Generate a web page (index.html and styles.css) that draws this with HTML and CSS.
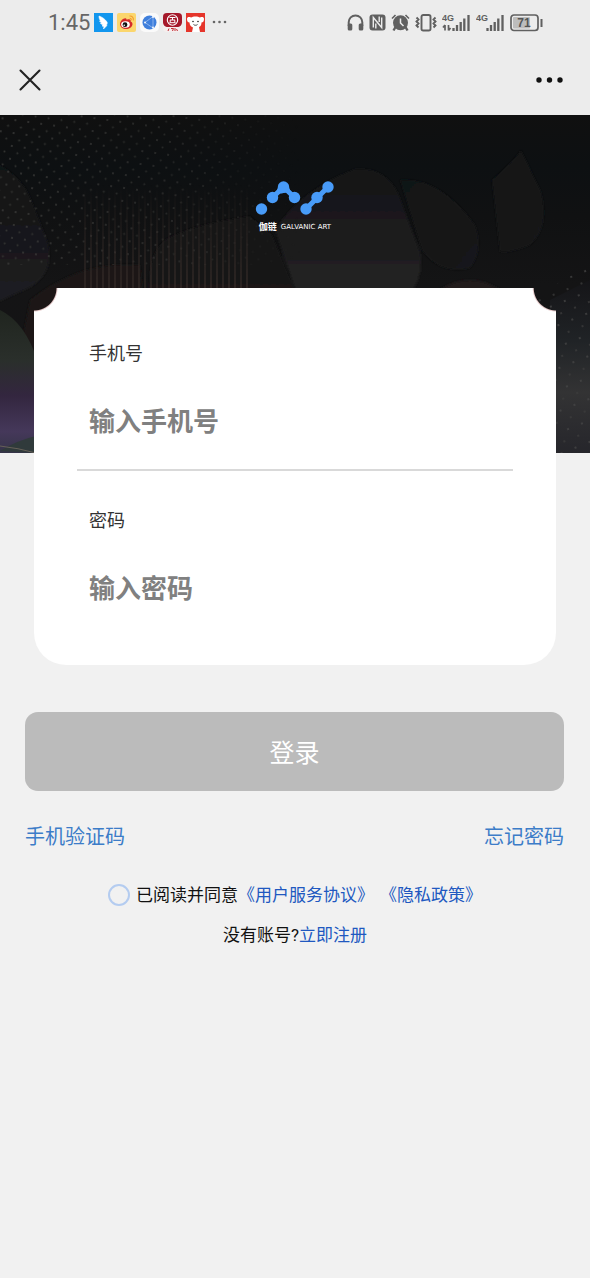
FILE: index.html
```html
<!DOCTYPE html>
<html lang="zh-CN">
<head>
<meta charset="utf-8">
<meta name="viewport" content="width=device-width, initial-scale=1">
<title>登录</title>
<link rel="stylesheet" href="styles.css">
</head>
<body>
<header class="top">
  <div class="status">
    <div class="status-left">
      <span class="time">1:45</span>
      <svg width="19" height="19" viewBox="0 0 19 19"><rect width="19" height="19" fill="#1296ee"/><path d="M5 3c3 1 6 3 8 6 .5 1 .2 1.600-.2 2.500L12 12.500h1L9.500 16l.5-2.500-2-.5 1-1-2.500-1.500 1-.4L5.500 8l1-.2C5.500 6.500 5 5 5 3z" fill="#fff" stroke="#fff" stroke-width=".6"/></svg>
      <svg width="19" height="19" viewBox="0 0 19 19"><rect width="19" height="19" rx="2" fill="#fbd66d"/><path d="M3 11c0-3 4-6.500 6-5.500 1 .5.500 1.500.500 1.500s3-1.500 4 0c.5.8 0 1.500 0 1.500s2 .5 2 2.500c0 3-3.500 5-6.500 5S3 14 3 11z" fill="#d52b2a"/><ellipse cx="8.500" cy="11.500" rx="4.300" ry="3.300" fill="#fff"/><circle cx="8" cy="11.700" r="2.400" fill="#111"/><circle cx="7.200" cy="12.200" r=".8" fill="#fff"/><path d="M12.500 3c2.500-.3 4.500 2 3.700 4.500M12.700 5.200c1.200 0 1.900 1 1.500 2" fill="none" stroke="#f39a2e" stroke-width="1.100"/></svg>
      <svg width="19" height="19" viewBox="0 0 19 19"><rect width="19" height="19" rx="5" fill="#fafafa"/><circle cx="9.500" cy="9.500" r="7" fill="#3f7fdc"/><path d="M13 3.500L5 9.500l8 5.500M13 3.500v11" fill="none" stroke="#a9c9f5" stroke-width=".7"/><circle cx="5" cy="9.500" r=".9" fill="#fff"/><circle cx="13" cy="4" r=".9" fill="#fff"/><circle cx="13" cy="14.500" r=".9" fill="#fff"/></svg>
      <svg width="19" height="19" viewBox="0 0 19 19"><rect width="19" height="19" rx="4" fill="#f5eeee"/><path d="M4 0h11c3 0 4 1.500 4 4v5c0 3-2 5-5 5H5c-3 0-5-2-5-5V4c0-2.500 1-4 4-4z" fill="#a5182a"/><circle cx="9.500" cy="7" r="5.200" fill="none" stroke="#fff" stroke-width="1.100"/><path d="M6.500 4.500h6M7 7h5M6.500 9.700h6M9.500 4.500v2.500M7.200 7v2.500M11.800 7v2.500" stroke="#fff" fill="none" stroke-width="1"/><path d="M6 15.500l-1 2.500M8 15.500h2.500l-1 2.500M12 15v3M13.500 16l1 2" stroke="#c22b32" fill="none"/></svg>
      <svg width="19" height="19" viewBox="0 0 19 19"><rect width="19" height="19" fill="#e5352b"/><path d="M1 6c0-2 2-2.500 4-1.500C7 3 12 3 14 4.500c2-1 4-.5 4 1.500 0 2.500-1 3.500-2.500 3.500 0 2.500-1 4-2.500 4.500l1 5H6l1-4.500c-2-.5-3.500-2.500-3.500-5C2 9.500 1 8.500 1 6z" fill="#fff"/><circle cx="7" cy="8.500" r=".8" fill="#222"/><circle cx="12" cy="8.500" r=".8" fill="#222"/><path d="M7.500 11.500c1 1 3 1 4 0" fill="none" stroke="#333" stroke-width=".9"/></svg>
      <svg class="more-apps" width="15" height="19" viewBox="0 0 15 19" fill="#666"><circle cx="2" cy="9" r="1.300"/><circle cx="7.500" cy="9" r="1.300"/><circle cx="13" cy="9" r="1.300"/></svg>
    </div>
    <div class="status-right">
      <svg width="17" height="18" viewBox="0 0 17 18"><path d="M1.700 12V8.200a6.800 6.800 0 0 1 13.600 0V12" fill="none" stroke="#606060" stroke-width="2"/><rect x=".7" y="9.500" width="4.600" height="7" rx="1.500" fill="#606060"/><rect x="11.700" y="9.500" width="4.600" height="7" rx="1.500" fill="#606060"/></svg>
      <svg width="17" height="18" viewBox="0 0 17 18"><rect x=".5" y=".5" width="16" height="16" rx="3" fill="#606060"/><path d="M4.300 13.500V3.500l8.400 10V3.500M6.800 14.500V9.500M10.200 2.500V8" fill="none" stroke="#ececec" stroke-width="1.400"/></svg>
      <svg width="19" height="18" viewBox="0 0 19 18"><circle cx="9.500" cy="8.700" r="7.500" fill="#606060"/><path d="M1 4.500l3.500-3.500M18 4.500l-3.500-3.500" stroke="#606060" stroke-width="1.600" fill="none"/><path d="M4.500 13l-2 3.500M14.500 13l2 3.500" stroke="#606060" stroke-width="2.400" fill="none"/><path d="M9.500 4.500v4.500l3 3" fill="none" stroke="#ececec" stroke-width="1.500"/></svg>
      <svg width="22" height="18" viewBox="0 0 22 18"><rect x="6.500" y="1" width="9" height="15.500" rx="1.800" fill="none" stroke="#606060" stroke-width="1.900"/><path d="M1.500 3.500l2 2-2 2 2 2-2 2 2 2M20.500 3.500l-2 2 2 2-2 2 2 2-2 2" fill="none" stroke="#606060" stroke-width="1.900"/></svg>
      <svg width="29" height="18" viewBox="0 0 29 18"><text class="net" x="0" y="7">4G</text><path d="M3 11v5.500M3 11l-2 2.500M6.500 16.500V11M6.500 16.500l2-2.500" stroke="#606060" fill="none" stroke-width="1.700"/><path d="M11.500 14V17M15 11v6M18.700 8v9M22.300 4.500V17M26.500 1v16" stroke="#606060" stroke-width="2.300"/></svg>
      <svg width="29" height="18" viewBox="0 0 29 18"><text class="net" x="0" y="7">4G</text><path d="M11.500 14V17M15 11v6M18.700 8v9M22.300 4.500V17M26.500 1v16" stroke="#606060" stroke-width="2.300"/></svg>
      <svg width="34" height="18" viewBox="0 0 34 18"><rect x="1" y="1" width="27" height="15.500" rx="3" fill="none" stroke="#606060" stroke-width="1.700"/><rect x="3" y="3" width="17" height="11.500" rx="1" fill="#bdbdbd"/><path d="M31.500 5v8" stroke="#606060" stroke-width="2"/><text class="level" x="14" y="13" text-anchor="middle">71</text></svg>
    </div>
  </div>
  <nav class="nav">
    <button class="icon-btn" type="button" aria-label="关闭"><svg width="22" height="22" viewBox="0 0 22 22"><path d="M1.500 1.500l19 19M20.500 1.500l-19 19" stroke="#222" stroke-width="2.100" stroke-linecap="round"/></svg></button>
    <button class="icon-btn" type="button" aria-label="更多"><svg width="28" height="22" viewBox="0 0 28 22" fill="#111"><circle cx="3" cy="11" r="2.700"/><circle cx="13.500" cy="11" r="2.700"/><circle cx="24" cy="11" r="2.700"/></svg></button>
  </nav>
</header>

<section class="hero">
  <svg class="hero-art" viewBox="0 0 590 338" preserveAspectRatio="xMidYMid slice" aria-hidden="true">
    <defs>
      <linearGradient id="base" x1="0" y1="0" x2="0" y2="1"><stop offset="0" stop-color="#101010"/><stop offset=".15" stop-color="#0d1012"/><stop offset=".3" stop-color="#101112"/><stop offset=".5" stop-color="#141415"/><stop offset="1" stop-color="#151315"/></linearGradient>
      <linearGradient id="oval" x1="0" y1="0" x2="0" y2="1"><stop offset="0" stop-color="#111213"/><stop offset=".6" stop-color="#19181c"/><stop offset="1" stop-color="#1f2022"/></linearGradient>
      <linearGradient id="mid" x1="0" y1="0" x2="0" y2="1"><stop offset="0" stop-color="#141415"/><stop offset=".35" stop-color="#1a191d"/><stop offset="1" stop-color="#242422"/></linearGradient>
      <linearGradient id="plum" x1="0" y1="0" x2="0" y2="1"><stop offset="0" stop-color="#131213"/><stop offset=".35" stop-color="#1b171a"/></linearGradient>
      <linearGradient id="drop" x1="0" y1="0" x2="1" y2="1"><stop offset="0" stop-color="#111213"/><stop offset="1" stop-color="#17181b"/></linearGradient>
      <linearGradient id="violet" x1="0" y1="0" x2="0" y2="1"><stop offset="0" stop-color="#20251f"/><stop offset=".35" stop-color="#2a2f2b"/><stop offset=".6" stop-color="#33263f"/><stop offset=".85" stop-color="#45385a"/><stop offset="1" stop-color="#353448"/></linearGradient>
      <linearGradient id="right" x1="0" y1="0" x2="0" y2="1"><stop offset="0" stop-color="#151518"/><stop offset=".35" stop-color="#202326"/><stop offset=".65" stop-color="#333334"/><stop offset="1" stop-color="#26262b"/></linearGradient>
      <linearGradient id="fade" x1="0" y1="0" x2="1" y2="0"><stop offset="0" stop-color="#fff"/><stop offset=".6" stop-color="#aaa"/><stop offset="1" stop-color="#000"/></linearGradient>
      <linearGradient id="rise" x1="0" y1="0" x2="0" y2="1"><stop offset="0" stop-color="#332a27" stop-opacity="0"/><stop offset="1" stop-color="#332a27" stop-opacity=".8"/></linearGradient>
      <pattern id="dots" width="13" height="13" patternUnits="userSpaceOnUse" patternTransform="rotate(8)"><circle cx="3" cy="3" r="1" fill="#3b3c3a"/><circle cx="9.500" cy="9.500" r="1" fill="#343533"/></pattern>
      <pattern id="specks" width="15" height="20" patternUnits="userSpaceOnUse" patternTransform="rotate(-22)"><circle cx="4" cy="4" r="1" fill="#454545"/><circle cx="11" cy="14" r="1" fill="#3c3c3c"/></pattern>
      <pattern id="lines" width="6" height="10" patternUnits="userSpaceOnUse"><rect width="2" height="10" fill="#fff"/></pattern>
      <mask id="dotMask"><rect width="300" height="150" fill="url(#fade)"/></mask>
      <mask id="lineMask"><rect x="80" y="70" width="170" height="110" fill="url(#lines)"/></mask>
      <filter id="soft"><feGaussianBlur stdDeviation="1"/></filter>
    </defs>
    <rect width="590" height="338" fill="url(#base)"/>
    <g filter="url(#soft)">
      <path d="M-4 48Q20 60 30 82L48 128Q56 164 20 177L-4 188z" fill="url(#oval)"/>
      <path d="M30 185Q80 145 140 150L160 338H0z" fill="#1b1714"/>
      <path d="M150 185Q146 140 165 125Q190 110 250 101L272 120L295 175V338H150z" fill="url(#plum)"/>
      <path d="M275 115Q300 75 355 54Q385 52 398 78L420 137Q425 160 408 182H298z" fill="url(#mid)"/>
      <path d="M400 65Q440 62 475 110Q484 135 470 153Q440 160 422 135z" fill="url(#drop)"/>
      <path d="M492 65Q515 45 521 35L541 77Q550 112 530 130Q510 138 500 137z" fill="url(#drop)"/>
      <path d="M440 174q30-18 60 0v20h-60z" fill="#221a1b"/>
    </g>
    <rect width="300" height="150" fill="url(#dots)" mask="url(#dotMask)"/>
    <rect x="80" y="70" width="170" height="110" fill="url(#rise)" mask="url(#lineMask)"/>
    <path d="M0 195Q25 207 38 247V338H0z" fill="url(#violet)"/>
    <path d="M0 336Q18 325 36 321V338z" fill="#303a3b"/>
    <path d="M0 331q18 2 36 7" fill="none" stroke="#666058"/>
    <path d="M550 185L590 165V338H550z" fill="url(#right)"/>
    <path d="M590 150L520 190V338H590z" fill="url(#specks)"/>
  </svg>
  <div class="brand">
    <svg width="80" height="36" viewBox="0 0 80 36" fill="#489bf8" role="img" aria-label="伽链"><path d="M17.500 18.500L28.500 8L39.500 18.500M51 30L73 8" fill="none" stroke="#489bf8" stroke-width="5"/><path d="M23 8h11l2 6q-4-1-7.500 0t-7.500 0z"/><circle cx="6.500" cy="30" r="5.700"/><circle cx="17.500" cy="18.500" r="5.700"/><circle cx="28.500" cy="8" r="5.700"/><circle cx="39.500" cy="18.500" r="5.700"/><circle cx="51" cy="30" r="5.700"/><circle cx="62" cy="18.500" r="5.700"/><circle cx="73" cy="8" r="5.700"/></svg>
    <p class="brand-name"><b>伽链</b><span>GALVANIC ART</span></p>
  </div>
</section>

<form class="login">
  <div class="card">
    <div class="field">
      <label for="phone">手机号</label>
      <input id="phone" type="tel" placeholder="输入手机号">
    </div>
    <div class="field">
      <label for="password">密码</label>
      <input id="password" type="password" placeholder="输入密码">
    </div>
  </div>
  <div class="actions">
    <button class="submit" type="button">登录</button>
    <div class="links"><a href="#sms">手机验证码</a><a href="#forgot">忘记密码</a></div>
  </div>
  <div class="agree">
    <input id="agree" type="checkbox">
    <label for="agree">已阅读并同意</label>
    <a href="#terms">《用户服务协议》</a>
    <a class="privacy" href="#privacy">《隐私政策》</a>
  </div>
  <p class="register">没有账号?<a href="#register">立即注册</a></p>
</form>
</body>
</html>
```
FILE: styles.css
```css
* { box-sizing: border-box; }
body {
  margin: 0;
  min-height: 100vh;
  background: #f1f1f1;
  color: #111;
  font-family: Roboto, "Noto Sans CJK SC", sans-serif;
}
svg { display: block; flex: none; }
button, input { font-family: inherit; }
a { color: #2058c0; text-decoration: none; }

.top { background: #ececec; }
.status {
  display: flex;
  justify-content: space-between;
  align-items: center;
  height: 45px;
  padding: 0 46px 0 48px;
}
.status-left, .status-right { display: flex; align-items: center; }
.status-left { gap: 4px; }
.status-right { gap: 5px; }
.time { font-size: 22px; line-height: 26px; color: #666; }
.more-apps { margin-left: 3px; }
.net { font: bold 9px "Liberation Sans", sans-serif; fill: #606060; }
.level { font: bold 12px "Liberation Sans", sans-serif; fill: #555; }

.nav {
  display: flex;
  justify-content: space-between;
  align-items: center;
  height: 70px;
  padding: 0 26px 0 19px;
}
.icon-btn { padding: 0; border: 0; background: none; }

.hero { position: relative; height: 338px; overflow: hidden; background: #111; }
.hero-art { position: absolute; inset: 0; width: 100%; height: 100%; }
.brand {
  position: relative;
  display: flex;
  flex-direction: column;
  align-items: center;
  gap: 4px;
  padding-top: 64px;
}
.brand-name {
  display: flex;
  align-items: center;
  gap: 4px;
  margin: 0;
  color: #fff;
  line-height: 16px;
}
.brand-name b { font-size: 9px; }
.brand-name span { font-family: "DejaVu Sans", sans-serif; font-size: 7px; }

.login { position: relative; margin-top: -165px; }
.card {
  margin: 0 34px;
  padding: 54px 43px 56px;
  border-radius: 0 0 32px 32px;
  background:
    radial-gradient(circle at 0 0, transparent 22px, #e6caca 23px, #fff 24px) left / 51% 100% no-repeat,
    radial-gradient(circle at 100% 0, transparent 22px, #e6caca 23px, #fff 24px) right / 51% 100% no-repeat;
}
.field { display: flex; flex-direction: column; gap: 36px; padding: 0 12px; }
.field + .field { padding-top: 38px; }
.field:first-child { padding-bottom: 27px; border-bottom: 2px solid #d9d9d9; }
.field label { font-size: 18px; line-height: 24px; color: #333; }
.field input {
  width: 100%;
  height: 40px;
  padding: 0;
  border: 0;
  outline: 0;
  background: none;
  color: #333;
  font-size: 26px;
  font-weight: bold;
}
.field input::placeholder { color: #808080; opacity: 1; }

.actions { padding: 47px 26px 0 25px; }
.submit {
  display: block;
  width: 100%;
  height: 79px;
  padding: 0 0 2px;
  border: 0;
  border-radius: 13px;
  background: #bbb;
  color: #fff;
  font-size: 25px;
}
.links {
  display: flex;
  justify-content: space-between;
  margin-top: 31px;
  font-size: 20px;
  line-height: 30px;
}
.links a { color: #3c7cc8; }
.agree {
  display: flex;
  justify-content: center;
  align-items: center;
  margin-top: 31px;
  font-size: 17px;
  line-height: 24px;
}
.agree input {
  appearance: none;
  width: 22px;
  height: 22px;
  margin: 0 6px 0 0;
  border: 2px solid #b4ccf0;
  border-radius: 50%;
}
.agree input:checked { background: #489bf8; }
.agree .privacy { margin-left: 6px; }
.register { margin: 16px 0 0; text-align: center; font-size: 17px; line-height: 24px; }
```
